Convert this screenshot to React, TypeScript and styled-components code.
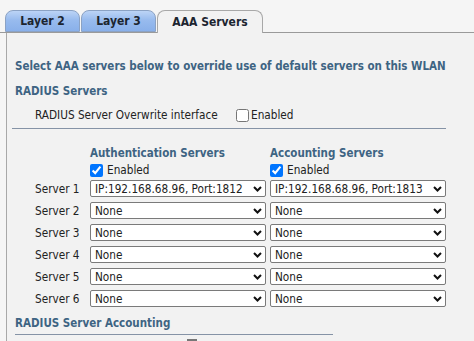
import React from "react";
import styled, { createGlobalStyle } from "styled-components";

const Global = createGlobalStyle`
  html, body { margin: 0; padding: 0; background: #f5f5f5; }
  body { font-family: "DejaVu Sans Condensed", "DejaVu Sans", sans-serif; font-size: 11.7px; color: #222; }
`;

const Page = styled.div`
  width: 474px;
  height: 341px;
  overflow: hidden;
  padding-top: 10px;
  box-sizing: border-box;
`;

const TabBar = styled.div`
  display: flex;
  align-items: flex-end;
  padding-left: 5px;
  height: 22px;
  border-bottom: 1px solid #9a9a9a;
`;

const Tab = styled.div<{ $active?: boolean }>`
  box-sizing: border-box;
  width: ${(p) => (p.$active ? 106 : 75)}px;
  height: ${(p) => (p.$active ? 23 : 22)}px;
  margin-bottom: ${(p) => (p.$active ? -1 : 0)}px;
  margin-right: 1px;
  border: 1px solid ${(p) => (p.$active ? "#a8a8a8" : "#8ba2c4")};
  border-bottom: ${(p) => (p.$active ? "none" : "1px solid #8ba2c4")};
  border-radius: 8px 8px 0 0;
  background: ${(p) =>
    p.$active ? "#f2f2f2" : "linear-gradient(#bcd4f6, #98bbee 45%, #89b0ea)"};
  display: flex;
  align-items: center;
  justify-content: center;
  font-weight: bold;
  font-size: 12px;
  color: #1c2530;
`;

const Panel = styled.div`
  margin-left: 6px;
  border-left: 1px solid #a8a8a8;
  background: #f2f2f2;
  padding: 26px 0 0 8px;
  height: 320px;
`;

const Heading = styled.div<{ $mt?: number }>`
  font-weight: bold;
  color: #3e6483;
  font-size: 11.5px;
  line-height: 14px;
  white-space: nowrap;
  margin-top: ${(p) => p.$mt ?? 0}px;
`;

const Row = styled.div`
  display: flex;
  align-items: center;
  padding-left: 20px;
  margin-top: 10px;
  height: 14px;
`;

const LabelText = styled.span<{ $w?: number }>`
  width: ${(p) => p.$w ?? 0}px;
  flex: none;
`;

const CheckLabel = styled.label<{ $gap?: number }>`
  display: inline-flex;
  align-items: center;
  gap: ${(p) => p.$gap ?? 2}px;
  height: 11px;
  input { margin: 0; width: 13px; height: 13px; }
`;

const Divider = styled.div<{ $w: number; $ml?: number; $mt?: number }>`
  width: ${(p) => p.$w}px;
  height: 0;
  border-top: 1px solid #8593a6;
  margin-top: ${(p) => p.$mt ?? 6}px;
  margin-left: ${(p) => p.$ml ?? 0}px;
`;

const Grid = styled.div`
  display: grid;
  grid-template-columns: 51px 176px 176px;
  grid-template-rows: 14px 10px repeat(6, 17px);
  column-gap: 4px;
  row-gap: 5px;
  padding-left: 20px;
  margin-top: 17px;
  align-items: center;
`;

const ColHead = styled.div`
  font-weight: bold;
  font-size: 11.5px;
  color: #3e6483;
  line-height: 14px;
  white-space: nowrap;
`;

const ServerLabel = styled.div`
  white-space: nowrap;
`;

const SelectBox = styled.div`
  box-sizing: border-box;
  height: 17px;
  background: #fff;
  border: 1px solid #7a7a7a;
  border-radius: 2px;
  display: flex;
  align-items: center;
  padding: 0 3px 0 4px;
  justify-content: space-between;
  white-space: nowrap;
  overflow: hidden;
`;

const Chevron = () => (
  <svg width="9" height="6" viewBox="0 0 9 6">
    <path d="M1 1 L4.5 4.5 L8 1" fill="none" stroke="#111" strokeWidth="2" />
  </svg>
);

const Select = ({ value }: { value: string }) => (
  <SelectBox>
    <span>{value}</span>
    <Chevron />
  </SelectBox>
);

const Nub = styled.div`
  width: 10px;
  height: 3px;
  background: #777;
  margin: 4px 0 0 172px;
`;

const servers = [
  ["IP:192.168.68.96, Port:1812", "IP:192.168.68.96, Port:1813"],
  ["None", "None"],
  ["None", "None"],
  ["None", "None"],
  ["None", "None"],
  ["None", "None"],
];

export default function App() {
  return (
    <Page>
      <Global />
      <TabBar>
        <Tab>Layer 2</Tab>
        <Tab>Layer 3</Tab>
        <Tab $active>AAA Servers</Tab>
      </TabBar>
      <Panel>
        <Heading>Select AAA servers below to override use of default servers on this WLAN</Heading>
        <Heading $mt={11}>RADIUS Servers</Heading>
        <Row>
          <LabelText $w={201}>RADIUS Server Overwrite interface</LabelText>
          <CheckLabel>
            <input type="checkbox" readOnly />
            Enabled
          </CheckLabel>
        </Row>
        <Divider $w={434} $ml={-3} />
        <Grid>
          <div />
          <ColHead>Authentication Servers</ColHead>
          <ColHead>Accounting Servers</ColHead>
          <div />
          <CheckLabel $gap={4}>
            <input type="checkbox" checked readOnly />
            Enabled
          </CheckLabel>
          <CheckLabel $gap={4}>
            <input type="checkbox" checked readOnly />
            Enabled
          </CheckLabel>
          {servers.map((s, i) => (
            <React.Fragment key={i}>
              <ServerLabel>Server {i + 1}</ServerLabel>
              <Select value={s[0]} />
              <Select value={s[1]} />
            </React.Fragment>
          ))}
        </Grid>
        <Heading $mt={9}>RADIUS Server Accounting</Heading>
        <Divider $w={318} $mt={4} />
        <Nub />
      </Panel>
    </Page>
  );
}
